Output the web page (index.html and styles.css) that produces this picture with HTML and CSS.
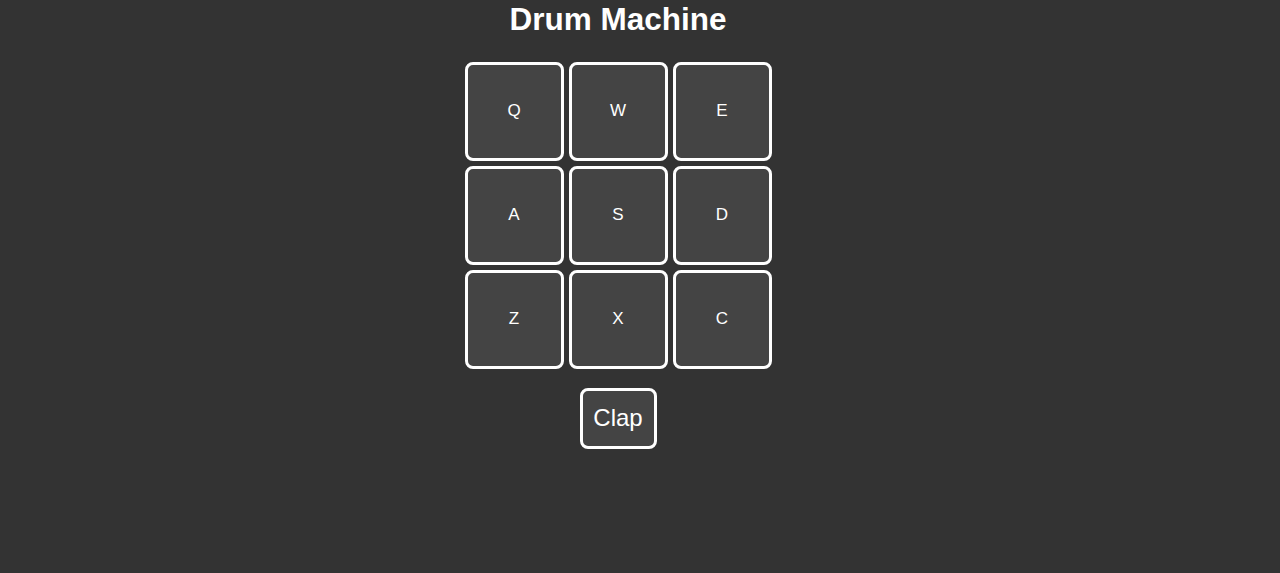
FILE: index.html
```html
<!DOCTYPE html>
<html lang="en">
<head>
    <meta charset="UTF-8">
    <meta name="viewport" content="width=device-width, initial-scale=1.0">
    <title>Drum Machine</title>
    <link rel="stylesheet" href="styles.css">
</head>
<body>

    <!-- Drum machine -->
    <div id="drum-machine" class="container">
        <h1>Drum Machine</h1>

        <div class="pads">
            <button class="drum-pad">Q</button>
            <button class="drum-pad">W</button>
            <button class="drum-pad">E</button>
            <button class="drum-pad">A</button>
            <button class="drum-pad">S</button>
            <button class="drum-pad">D</button>
            <button class="drum-pad">Z</button>
            <button class="drum-pad">X</button>
            <button class="drum-pad">C</button>
        </div>

        <div id="display" class="display">Clap</div>
    </div>

</body>
</html>
```

FILE: styles.css
```css
* {
    margin: 0;
    padding: 0;
    box-sizing: border-box;
    font-family: "Liberation Sans", Arial, sans-serif;
}
body {
    background-color: #333;
    color: #fff;
    height: 100vh;
}
.container {
    display: flex;
    flex-direction: column;
    align-items: center;
    width: 1236px;
}
h1 {
    font-size: 31.5px;
    font-weight: bold;
    line-height: 38px;
    margin-bottom: 24px;
}
.pads {
    display: grid;
    grid-template-columns: repeat(3, 99px);
    grid-auto-rows: 99px;
    gap: 5px;
}
.drum-pad {
    background-color: #444;
    color: #fff;
    border: 3px solid #fff;
    border-radius: 8px;
    font-size: 17px;
    padding-bottom: 1px;
    cursor: pointer;
}
.display {
    margin-top: 19px;
    width: 77px;
    height: 61px;
    display: flex;
    justify-content: center;
    align-items: center;
    background-color: #444;
    border: 3px solid #fff;
    border-radius: 8px;
    font-size: 24px;
    padding-bottom: 2px;
}
```
